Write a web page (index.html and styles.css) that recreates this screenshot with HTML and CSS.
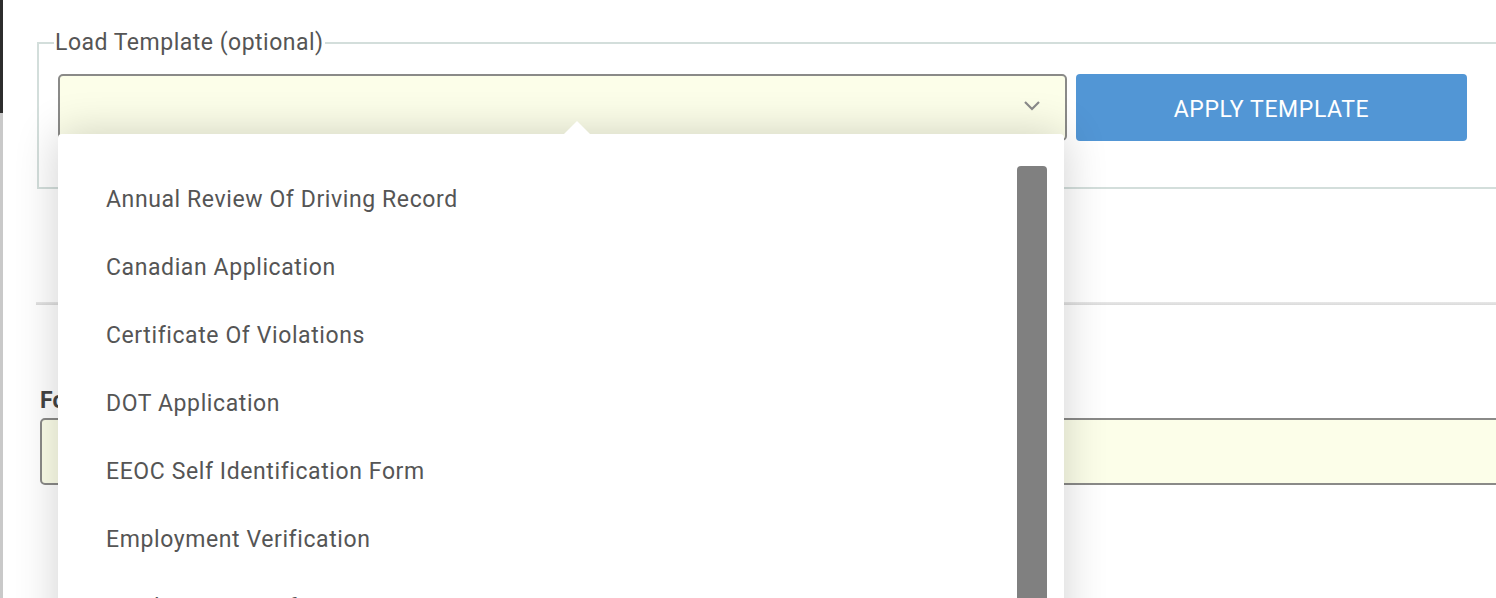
FILE: index.html
```html
<!DOCTYPE html>
<html lang="en">
<head>
<meta charset="utf-8">
<title>Load Template</title>
<link rel="stylesheet" href="styles.css">
</head>
<body>
<div class="page">
  <div class="edge">
    <div class="edge-top"></div>
    <div class="edge-bottom"></div>
  </div>
  <main class="main">
    <fieldset class="template-box">
      <legend class="template-legend">Load Template (optional)</legend>
      <div class="template-row">
        <div class="select">
          <svg class="chevron" width="18" height="11" viewBox="0 0 18 11"><path d="M2 2 L9 9 L16 2" fill="none" stroke="#8a8a8a" stroke-width="2.2"/></svg>
          <div class="menu">
            <div class="caret"></div>
            <div class="menu-list">
              <div class="menu-item">Annual Review Of Driving Record</div>
              <div class="menu-item">Canadian Application</div>
              <div class="menu-item">Certificate Of Violations</div>
              <div class="menu-item">DOT Application</div>
              <div class="menu-item">EEOC Self Identification Form</div>
              <div class="menu-item">Employment Verification</div>
              <div class="menu-item">Employment Verification Form</div>
            </div>
            <div class="scroll-thumb"></div>
          </div>
        </div>
        <button class="apply-btn">APPLY TEMPLATE</button>
      </div>
    </fieldset>
    <div class="divider"></div>
    <div class="field">
      <label class="field-label">Form Name</label>
      <div class="field-input"></div>
    </div>
  </main>
</div>
</body>
</html>
```

FILE: styles.css
```css
html, body {
  margin: 0;
  padding: 0;
  background: #ffffff;
  overflow: hidden;
}

body {
  font-family: Roboto, "Liberation Sans", Arial, sans-serif;
  width: 1496px;
  height: 598px;
}

.page {
  display: flex;
  height: 598px;
}

.edge {
  width: 3px;
  flex: 0 0 3px;
  display: flex;
  flex-direction: column;
}

.edge-top {
  height: 113px;
  background: #2d2d2d;
}

.edge-bottom {
  flex: 1;
  background: #c9c9c9;
}

.main {
  flex: 1;
  padding: 31px 0 0 34px;
  overflow: hidden;
  position: relative;
}

.template-box {
  margin: 0 -80px 0 0;
  border: 2px solid #d3dedb;
  padding: 19px 0 46px 19px;
  min-width: 0;
}

.template-legend {
  font-size: 23px;
  letter-spacing: 0.5px;
  line-height: 24px;
  color: #555555;
  padding: 0 1px;
  margin-left: -4px;
}

.template-row {
  display: flex;
  gap: 9px;
}

.select {
  position: relative;
  flex: 0 0 1009px;
  height: 67px;
  box-sizing: border-box;
  border: 2px solid #8a8a88;
  border-radius: 5px;
  background: #fcfee9;
}

.chevron {
  position: absolute;
  right: 24px;
  top: 24px;
}

.apply-btn {
  flex: 0 0 391px;
  height: 67px;
  border: none;
  border-radius: 4px;
  background: #5296d5;
  color: #ffffff;
  font-family: Roboto, "Liberation Sans", Arial, sans-serif;
  font-size: 23px;
  letter-spacing: 0.6px;
  padding: 3px 0 0;
}

.menu {
  position: absolute;
  left: -2px;
  top: 58px;
  width: 1006px;
  height: 520px;
  background: #ffffff;
  border-radius: 4px;
  box-shadow: 0 0 44px rgba(0, 0, 0, 0.19);
  z-index: 10;
}

.caret {
  position: absolute;
  top: -13px;
  left: 506px;
  width: 0;
  height: 0;
  border-left: 13px solid transparent;
  border-right: 13px solid transparent;
  border-bottom: 13px solid #ffffff;
}

.menu-list {
  padding-top: 32px;
}

.menu-item {
  height: 68px;
  line-height: 68px;
  padding-left: 48px;
  font-size: 23px;
  letter-spacing: 0.6px;
  color: #555555;
  white-space: nowrap;
}

.scroll-thumb {
  position: absolute;
  right: 17px;
  top: 32px;
  width: 30px;
  height: 500px;
  background: #808080;
  border-radius: 4px;
}

.divider {
  margin: 113px -80px 0 -1px;
  height: 3px;
  background: linear-gradient(#e8e8e8, #dadada);
}

.field {
  display: flex;
  flex-direction: column;
  padding: 82px 0 0 3px;
}

.field-label {
  font-size: 23px;
  font-weight: 700;
  color: #444444;
  line-height: 28px;
  margin-bottom: 3px;
}

.field-input {
  height: 67px;
  box-sizing: border-box;
  margin-right: -80px;
  border: 2px solid #8a8a88;
  border-radius: 5px;
  background: #fcfee9;
}
```
